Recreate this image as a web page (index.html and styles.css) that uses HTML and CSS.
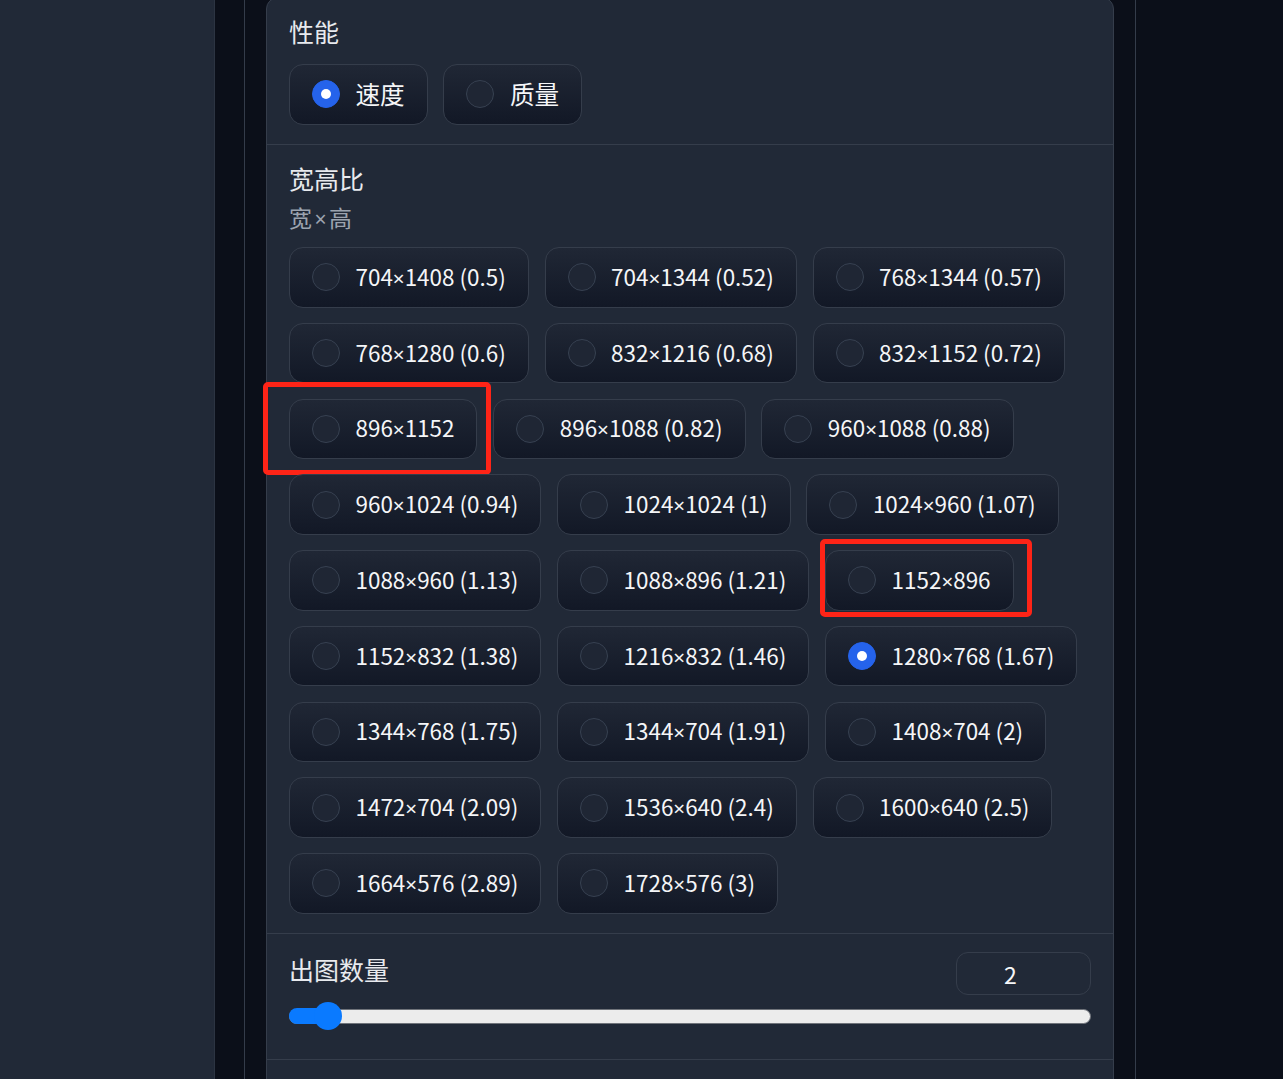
FILE: index.html
```html
<!DOCTYPE html>
<html lang="zh">
<head>
<meta charset="utf-8">
<title>设置</title>
<link rel="stylesheet" href="styles.css">
</head>
<body>
<div class="app">
  <aside class="sidebar"></aside>
  <main class="column">
    <div class="panel">
      <section class="block">
        <div class="label">性能</div>
        <div class="options">
          <label class="opt cjk checked"><span class="dot"></span><span class="txt">速度</span></label>
          <label class="opt cjk"><span class="dot"></span><span class="txt">质量</span></label>
        </div>
      </section>
      <section class="block">
        <div class="label">宽高比</div>
        <div class="info">宽<span class="x">×</span>高</div>
        <div class="options wrap">
          <label class="opt"><span class="dot"></span><span class="txt">704<span class="x">×</span>1408 (0.5)</span></label>
          <label class="opt"><span class="dot"></span><span class="txt">704<span class="x">×</span>1344 (0.52)</span></label>
          <label class="opt"><span class="dot"></span><span class="txt">768<span class="x">×</span>1344 (0.57)</span></label>
          <label class="opt"><span class="dot"></span><span class="txt">768<span class="x">×</span>1280 (0.6)</span></label>
          <label class="opt"><span class="dot"></span><span class="txt">832<span class="x">×</span>1216 (0.68)</span></label>
          <label class="opt"><span class="dot"></span><span class="txt">832<span class="x">×</span>1152 (0.72)</span></label>
          <label class="opt mark mark-a"><span class="dot"></span><span class="txt">896<span class="x">×</span>1152</span></label>
          <label class="opt"><span class="dot"></span><span class="txt">896<span class="x">×</span>1088 (0.82)</span></label>
          <label class="opt"><span class="dot"></span><span class="txt">960<span class="x">×</span>1088 (0.88)</span></label>
          <label class="opt"><span class="dot"></span><span class="txt">960<span class="x">×</span>1024 (0.94)</span></label>
          <label class="opt"><span class="dot"></span><span class="txt">1024<span class="x">×</span>1024 (1)</span></label>
          <label class="opt"><span class="dot"></span><span class="txt">1024<span class="x">×</span>960 (1.07)</span></label>
          <label class="opt"><span class="dot"></span><span class="txt">1088<span class="x">×</span>960 (1.13)</span></label>
          <label class="opt"><span class="dot"></span><span class="txt">1088<span class="x">×</span>896 (1.21)</span></label>
          <label class="opt mark mark-b"><span class="dot"></span><span class="txt">1152<span class="x">×</span>896</span></label>
          <label class="opt"><span class="dot"></span><span class="txt">1152<span class="x">×</span>832 (1.38)</span></label>
          <label class="opt"><span class="dot"></span><span class="txt">1216<span class="x">×</span>832 (1.46)</span></label>
          <label class="opt checked"><span class="dot"></span><span class="txt">1280<span class="x">×</span>768 (1.67)</span></label>
          <label class="opt"><span class="dot"></span><span class="txt">1344<span class="x">×</span>768 (1.75)</span></label>
          <label class="opt"><span class="dot"></span><span class="txt">1344<span class="x">×</span>704 (1.91)</span></label>
          <label class="opt"><span class="dot"></span><span class="txt">1408<span class="x">×</span>704 (2)</span></label>
          <label class="opt"><span class="dot"></span><span class="txt">1472<span class="x">×</span>704 (2.09)</span></label>
          <label class="opt"><span class="dot"></span><span class="txt">1536<span class="x">×</span>640 (2.4)</span></label>
          <label class="opt"><span class="dot"></span><span class="txt">1600<span class="x">×</span>640 (2.5)</span></label>
          <label class="opt"><span class="dot"></span><span class="txt">1664<span class="x">×</span>576 (2.89)</span></label>
          <label class="opt"><span class="dot"></span><span class="txt">1728<span class="x">×</span>576 (3)</span></label>
        </div>
      </section>
      <section class="block slider-block">
        <div class="slider-head">
          <div class="label head-label">出图数量</div>
          <div class="num">2</div>
        </div>
        <div class="slider">
          <div class="track">
            <div class="fill"></div>
            <div class="thumb"></div>
          </div>
        </div>
      </section>
      <section class="block tail"></section>
    </div>
  </main>
</div>
</body>
</html>
```

FILE: styles.css
```css
html, body {
  margin: 0;
  padding: 0;
  height: 100%;
  overflow: hidden;
  background: #0b0f19;
  font-family: "Noto Sans CJK SC", "Noto Sans", sans-serif;
  color: #f3f4f6;
}

.app {
  display: flex;
  align-items: stretch;
  height: 1079px;
}

.sidebar {
  width: 214px;
  flex: none;
  background: #212937;
  border-right: 1px solid #2c3442;
}

.column {
  margin-left: 29px;
  width: 848px;
  flex: none;
  border-left: 1px solid #343c4a;
  border-right: 1px solid #343c4a;
  padding: 0 21px;
  box-sizing: content-box;
}

.panel {
  margin-top: -3px;
  background: #212937;
  border: 1px solid #353d4b;
  border-radius: 12px;
  height: 1200px;
}

.block {
  padding: 16px 22px 19px;
  border-bottom: 1px solid #353d4b;
}

.label {
  font-size: 25px;
  line-height: 35px;
  color: #e8eaee;
}

.info {
  margin-top: 5px;
  height: 32px;
  font-size: 23px;
  line-height: 32px;
  letter-spacing: 2.5px;
  color: #9ca3af;
}

.x {
  font-family: "Noto Sans", "DejaVu Sans", sans-serif;
  font-size: 0.92em;
  line-height: 1;
}

.options {
  display: flex;
  gap: 15.25px 15.75px;
  margin-top: 15px;
}

.options.wrap {
  flex-wrap: wrap;
  margin-top: 14.5px;
  margin-right: -16px;
}

.opt {
  position: relative;
  display: flex;
  align-items: center;
  height: 60.5px;
  box-sizing: border-box;
  padding: 0 22px;
  border: 1px solid #353d4b;
  border-radius: 14px;
  background: linear-gradient(to bottom, #202735, #121826);
  font-size: 22.45px;
  white-space: nowrap;
}

.opt.cjk {
  font-size: 24.6px;
}

.dot {
  width: 28px;
  height: 28px;
  box-sizing: border-box;
  border-radius: 50%;
  border: 1px solid #374151;
  background: #1f2634;
  margin-right: 15.5px;
  flex: none;
}

.opt.checked .dot {
  background: #2563eb;
  border-color: #2563eb;
  display: flex;
  align-items: center;
  justify-content: center;
}

.opt.checked .dot::after {
  content: "";
  width: 10px;
  height: 10px;
  border-radius: 50%;
  background: #fff;
}

.txt {
  line-height: 32px;
  margin-bottom: 3px;
  color: #f5f6f8;
}

.mark::after {
  content: "";
  position: absolute;
  border: 5.5px solid #fe2417;
  border-radius: 5px;
  pointer-events: none;
}

.mark-a::after {
  left: -27px;
  right: -15px;
  top: -18px;
  bottom: -17px;
}

.mark-b::after {
  left: -6px;
  right: -19px;
  top: -12px;
  bottom: -7px;
}

.slider-block {
  padding-bottom: 28.5px;
}

.slider-head {
  display: flex;
  justify-content: space-between;
  align-items: flex-start;
}

.head-label {
  padding-top: 2px;
}

.num {
  margin-top: 2.5px;
  width: 135px;
  height: 43px;
  box-sizing: border-box;
  padding-right: 26px;
  border: 1px solid #353d4b;
  border-radius: 12px;
  display: flex;
  align-items: center;
  justify-content: center;
  font-size: 23px;
  color: #f5f6f8;
}

.slider {
  margin-top: 7px;
  height: 28px;
  display: flex;
  align-items: center;
}

.track {
  position: relative;
  width: 100%;
  height: 15px;
  box-sizing: border-box;
  background: #ececec;
  border: 1.5px solid #6f737a;
  border-radius: 8px;
}

.fill {
  position: absolute;
  left: -1.5px;
  top: -1.5px;
  bottom: -1.5px;
  width: 40px;
  background: #0a7aff;
  border-radius: 8px;
}

.thumb {
  position: absolute;
  left: 23.5px;
  top: 50%;
  width: 28px;
  height: 28px;
  margin-top: -14px;
  border-radius: 50%;
  background: #0a7aff;
}

.tail {
  height: 200px;
  border-bottom: none;
}
```
